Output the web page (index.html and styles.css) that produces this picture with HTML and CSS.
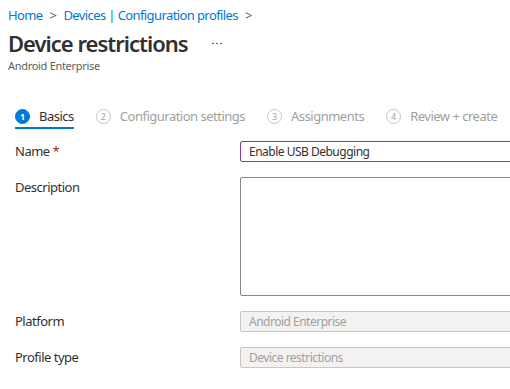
FILE: index.html
```html
<!DOCTYPE html>
<html>
<head>
    <title>Device restrictions</title>
    <meta name="viewport" content="width=device-width, initial-scale=1">
    <link rel="stylesheet" href="styles.css">
</head>
<body>

    <div class="header">
        <div class="breadcrumb">
            <a href="#">Home</a>
            <span class="sep">&gt;</span>
            <a href="#">Devices | Configuration profiles</a>
            <span class="sep">&gt;</span>
        </div>
        <div class="title-row">
            <h1>Device restrictions</h1>
            <svg class="more" width="10" height="3" viewBox="0 0 10 3">
                <circle cx="1" cy="1.5" r="0.8"/>
                <circle cx="5" cy="1.5" r="0.8"/>
                <circle cx="9" cy="1.5" r="0.8"/>
            </svg>
        </div>
        <div class="subtitle">Android Enterprise</div>
    </div>

    <div class="steps">
        <div class="step active"><span class="num">1</span>Basics</div>
        <div class="step"><span class="num">2</span>Configuration settings</div>
        <div class="step"><span class="num">3</span>Assignments</div>
        <div class="step"><span class="num">4</span>Review + create</div>
    </div>

    <form class="fields">
        <label for="name">Name <span class="req">*</span></label>
        <input id="name" type="text" class="field focus" value="Enable USB Debugging">

        <label for="description">Description</label>
        <textarea id="description" class="field area"></textarea>

        <label for="platform">Platform</label>
        <input id="platform" type="text" class="field" value="Android Enterprise" disabled>

        <label for="profileType">Profile type</label>
        <input id="profileType" type="text" class="field" value="Device restrictions" disabled>
    </form>

</body>
</html>
```

FILE: styles.css
```css
html, body {
    margin: 0;
}

body {
    font-family: 'Noto Sans', 'Open Sans', sans-serif;
    font-size: 13px;
    letter-spacing: -0.5px;
    color: #323130;
    overflow: hidden;
    width: 510px;
    height: 389px;
}

.header {
    padding: 5px 8px 0;
}

.breadcrumb {
    line-height: 20px;
    color: #0078d4;
    letter-spacing: -0.6px;
    display: flex;
    gap: 7px;
}

.breadcrumb a {
    color: #0078d4;
    text-decoration: none;
}

.breadcrumb .sep {
    color: #605e5c;
}

.title-row {
    display: flex;
    align-items: center;
    margin-top: 3px;
}

h1 {
    font-size: 22px;
    font-weight: 600;
    line-height: 30px;
    letter-spacing: -1px;
    margin: 0;
}

.more {
    margin-left: 24px;
    fill: #323130;
}

.subtitle {
    font-size: 11px;
    letter-spacing: -0.3px;
    color: #605e5c;
    line-height: 15px;
}

.steps {
    display: flex;
    padding-left: 15px;
    margin-top: 32px;
}

.step {
    display: flex;
    align-items: center;
    gap: 9px;
    height: 22px;
    margin-right: 22px;
    color: #a19f9d;
    white-space: nowrap;
    border-bottom: 2px solid transparent;
}

.step .num {
    width: 13px;
    height: 13px;
    border: 1px solid #c8c6c4;
    border-radius: 50%;
    font-size: 9px;
    letter-spacing: 0;
    display: flex;
    align-items: center;
    justify-content: center;
}

.step.active {
    color: #323130;
    border-bottom-color: #0078d4;
}

.step.active .num {
    background-color: #0078d4;
    border-color: #0078d4;
    color: white;
    font-weight: bold;
}

.fields {
    display: grid;
    grid-template-columns: 225px 320px;
    row-gap: 15px;
    padding-left: 15px;
    margin-top: 12px;
}

.fields label {
    line-height: 21px;
}

.req {
    color: #a4262c;
}

.field {
    font-family: inherit;
    font-size: 12px;
    letter-spacing: -0.5px;
    height: 21px;
    box-sizing: border-box;
    border: 1px solid #8a8886;
    border-radius: 2px;
    padding: 0 8px;
    color: #323130;
    margin: 0;
}

.field.focus {
    border-color: #8c3aa8;
}

.field.area {
    height: 119px;
    resize: none;
}

.field:disabled {
    background-color: #f3f2f1;
    border-color: #c8c6c4;
    color: #a19f9d;
}
```
